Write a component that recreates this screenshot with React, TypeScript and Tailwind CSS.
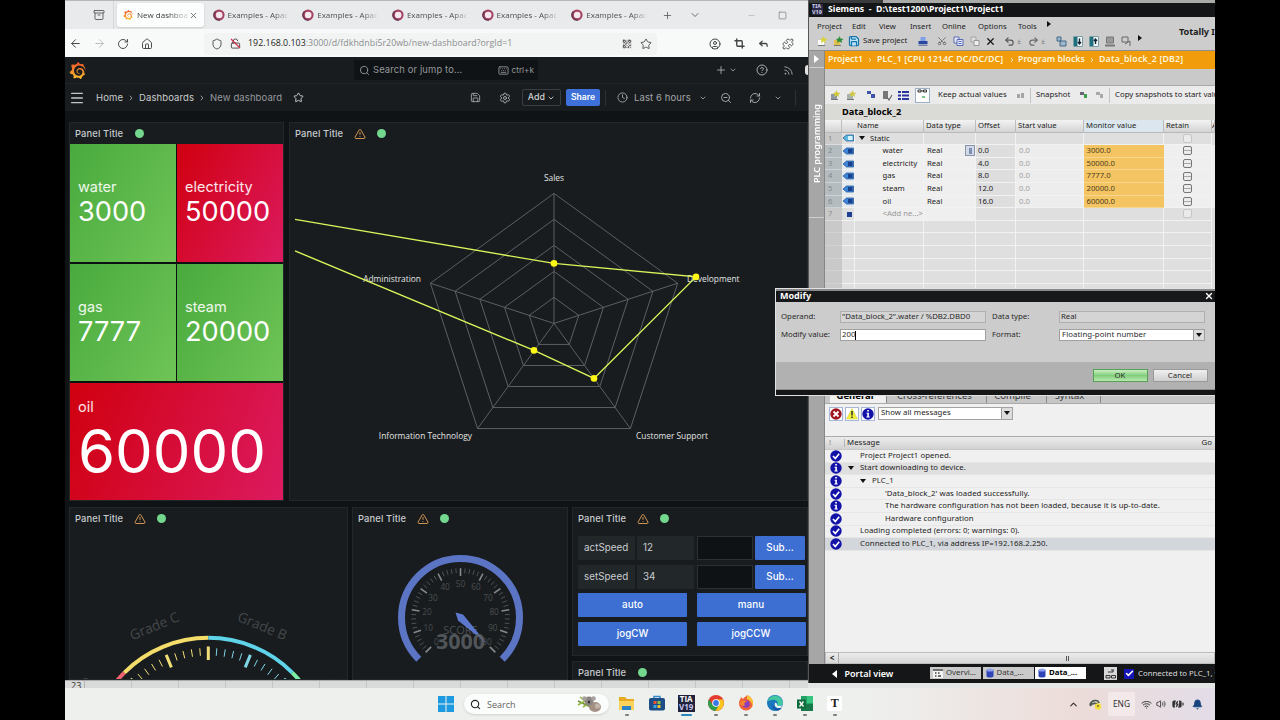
import type { ReactNode } from "react";
import {
  Archive, ArrowLeft, ArrowRight, BatteryCharging, Bell, Check, ChevronDown, ChevronRight, ChevronUp, CircleHelp, CircleUser,
  Clock4, Crop, House, Keyboard, LockOpen, Menu, Minus, Plus, Puzzle, QrCode, RefreshCw, Reply, RotateCw, Rss, Save, Scissors,
  Search, Settings, Shield, Square, Star, TriangleAlert, Undo2, Redo2, Volume2, Wifi, X, ZoomOut,
} from "lucide-react";
import { SiGrafana } from "react-icons/si";

const EXAMPLE_TABS = [1, 2, 3, 4, 5];

function polar(cx: number, cy: number, r: number, deg: number): [number, number] {
  const a = ((deg - 90) * Math.PI) / 180;
  return [cx + r * Math.cos(a), cy + r * Math.sin(a)];
}

function arc(cx: number, cy: number, r: number, from: number, to: number) {
  const [x1, y1] = polar(cx, cy, r, from);
  const [x2, y2] = polar(cx, cy, r, to);
  return `M${x1} ${y1} A${r} ${r} 0 ${to - from > 180 ? 1 : 0} 1 ${x2} ${y2}`;
}

function GrafanaLogo({ size }: { size: number }) {
  return (
    <>
      <svg width="0" height="0" className="absolute">
        <linearGradient id="grafana" x1="0" y1="0" x2="0" y2="1">
          <stop offset="0" stopColor="#ef5228" />
          <stop offset="1" stopColor="#fbc02d" />
        </linearGradient>
      </svg>
      <SiGrafana size={size} fill="url(#grafana)" />
    </>
  );
}

/* ---------- Firefox window ---------- */

function TabStrip() {
  return (
    <div className="flex h-[29px] items-center border-t border-[#b8b8b8] bg-[#e8eaeb] text-[9px] text-[#4b4d50] [&>*]:shrink-0">
      <div className="flex h-full w-[49px] items-center justify-end border-r border-[#d5d7d8] pr-[8px]">
        <Archive size={12} strokeWidth={1.7} />
      </div>
      <div className="ml-[3px] flex h-[24px] w-[87px] items-center rounded-[3px] bg-[#fcfdfd] pl-[6px] shadow-sm [&>*]:shrink-0">
        <GrafanaLogo size={10} />
        <span className="ml-[4px] w-[51px] overflow-hidden whitespace-nowrap bg-linear-to-r from-[#333] from-60% to-[#ddd] bg-clip-text text-[8px] leading-[12px] text-transparent">New dashboa</span>
        <X size={9} strokeWidth={2} className="ml-px" />
      </div>
      {EXAMPLE_TABS.map((n) => (
        <div key={n} className="flex w-[89.7px] items-center pl-[8.5px]">
          <svg width="12" height="12" viewBox="0 0 12 12" className="shrink-0">
            <circle cx="6" cy="6" r="5.6" fill="#a34262" />
            <circle cx="6.2" cy="6" r="3.3" fill="#f6e9ee" />
            <path d="M2.5 2.5A5 5 0 0 0 7 11" fill="none" stroke="#5d3550" strokeWidth="1.2" />
          </svg>
          <span className="ml-[3px] w-[61px] overflow-hidden whitespace-nowrap bg-linear-to-r from-[#46484b] from-75% to-[#e0e0e0] bg-clip-text text-[8px] leading-[12px] text-transparent">Examples - Apac</span>
        </div>
      ))}
      <Plus size={11} strokeWidth={1.6} className="ml-[10px]" />
      <ChevronDown size={12} strokeWidth={1.6} className="ml-[16px]" />
      <Minus size={9} strokeWidth={1.2} className="ml-[46px] text-[#999]" />
      <Square size={9} strokeWidth={1.8} className="ml-[22px] text-[#777]" />
    </div>
  );
}

function NavBar() {
  return (
    <div className="flex h-[28px] items-center bg-[#f8faf9] pt-[1px] text-[#444] [&>*]:shrink-0">
      <ArrowLeft size={13} strokeWidth={1.8} className="ml-[4px]" />
      <ArrowRight size={13} strokeWidth={1.6} className="ml-[11px] text-[#b5b7b8]" />
      <RotateCw size={12} strokeWidth={1.9} className="ml-[11px]" />
      <House size={12} strokeWidth={1.9} className="ml-[12px]" />
      <div className="ml-[51px] flex h-[22px] w-[453px] items-center rounded-sm bg-[#f2f4f3]">
        <Shield size={12} strokeWidth={1.8} className="ml-[7px]" />
        <span className="relative ml-[7px]">
          <LockOpen size={11} strokeWidth={2} />
          <svg width="11" height="11" viewBox="0 0 11 11" className="absolute inset-0">
            <path d="M1 1 10 10" stroke="#d2304c" strokeWidth="1.2" />
          </svg>
        </span>
        <span className="ml-[7px] whitespace-nowrap text-[8.8px] tracking-[0.04px] text-[#8b8d8f]">
          <span className="text-[#222]">192.168.0.103</span>:3000/d/fdkhdnbi5r20wb/new-dashboard?orgId=1
        </span>
        <QrCode size={10} strokeWidth={2.4} className="ml-auto" />
        <Star size={12} strokeWidth={1.8} className="mr-[5px] ml-[8px]" />
      </div>
      <CircleUser size={12} strokeWidth={2} className="ml-[52px]" />
      <Crop size={11} strokeWidth={3} className="ml-[13px]" />
      <Reply size={11} strokeWidth={2.8} className="ml-[13px]" />
      <Puzzle size={12} strokeWidth={1.8} className="ml-[13px]" />
    </div>
  );
}

function GrafanaHeader() {
  return (
    <div className="bg-[#181c1e] text-[#a9acb0]">
      <div className="flex h-[27px] items-center border-b border-[#212628] [&>*]:shrink-0">
        <span className="ml-[4px] w-[285px]"><GrafanaLogo size={17} /></span>
        <div className="flex h-[20px] w-[184px] items-center bg-[#101315] text-[9.4px] text-[#94979a]">
          <Search size={11} strokeWidth={2} className="ml-[5px]" />
          <span className="ml-[3px] tracking-[0.14px]">Search or jump to...</span>
          <Keyboard size={11} strokeWidth={1.9} className="ml-auto" />
          <span className="mr-[4px] ml-[3px] text-[8.2px]">ctrl+k</span>
        </div>
        <Plus size={12} strokeWidth={1.8} className="ml-[177px]" />
        <ChevronDown size={8} strokeWidth={2.4} className="ml-[2px]" />
        <CircleHelp size={12} strokeWidth={2} className="ml-[19px]" />
        <Rss size={11} strokeWidth={2} className="ml-[15px]" />
        <span className="ml-auto h-[10px] w-[3px] rounded-l-full bg-[#e3e3e3]" />
      </div>
      <div className="flex h-[27px] items-center text-[9.5px] tracking-[0.1px] [&>*]:shrink-0">
        <Menu size={16} strokeWidth={2.1} className="ml-[4px] text-[#c3c5c8]" />
        <span className="ml-[11px] text-[#cacccf]">Home</span>
        <ChevronRight size={8} strokeWidth={2.5} className="ml-[4px]" />
        <span className="ml-[4px] text-[#cacccf]">Dashboards</span>
        <ChevronRight size={8} strokeWidth={2.5} className="ml-[4px]" />
        <span className="ml-[4px] text-[#96999d]">New dashboard</span>
        <Star size={11} strokeWidth={2} className="ml-[11px] text-[#d0d2d5]" />
        <div className="ml-auto flex items-center">
          <Save size={11} strokeWidth={1.9} />
          <Settings size={12} strokeWidth={1.9} className="ml-[18px]" />
          <div className="ml-[11px] flex h-[17px] w-[39px] items-center justify-center gap-[2px] rounded-[2px] border border-[#3a3f43] text-[8.8px] font-medium text-[#d0d2d5]">
            Add <ChevronDown size={8} strokeWidth={2.6} />
          </div>
          <div className="ml-[5px] flex h-[17px] w-[34px] items-center justify-center rounded-[2px] bg-[#3d71d9] text-[8.6px] font-semibold tracking-normal text-white">Share</div>
          <span className="ml-[5px] h-[16px] w-px bg-[#2c3135]" />
          <Clock4 size={11} strokeWidth={1.9} className="ml-[11px]" />
          <span className="ml-[6px] w-[57px] whitespace-nowrap text-[#a4a7ab]">Last 6 hours</span>
          <ChevronDown size={8} strokeWidth={2.4} className="ml-[8px]" />
          <ZoomOut size={12} strokeWidth={1.9} className="ml-[13px]" />
          <RefreshCw size={12} strokeWidth={1.9} className="ml-[17px]" />
          <ChevronDown size={8} strokeWidth={2.4} className="ml-[13px]" />
          <span className="mr-[12px] ml-[13px] h-[16px] w-px bg-[#2c3135]" />
        </div>
      </div>
    </div>
  );
}

function PanelHead({ warn = false }: { warn?: boolean }) {
  return (
    <div className="flex h-[21px] shrink-0 items-center pl-[5px] text-[9.4px] font-medium tracking-[0.12px] text-[#c8cbcf]">
      <span className="w-[49px] whitespace-nowrap">Panel Title</span>
      {warn && <TriangleAlert size={12} strokeWidth={1.9} className="ml-[9.500px] text-[#d99a55]" />}
      <span className="ml-[11px] size-[9px] rounded-full bg-[#73d88e]" />
    </div>
  );
}

function StatTile({ name, value }: { name: string; value: string }) {
  const bad = Number(value) >= 50000;
  return (
    <div className={`flex flex-col justify-center pt-[1px] pl-[8px] text-white ${bad ? "bg-linear-[120deg] from-[#d0000f] to-[#dc1a60]" : "bg-linear-[120deg] from-[#49aa3d] to-[#6fc457]"}`}>
      <span className="text-[14.5px] leading-[17px] text-white/90">{name}</span>
      <span className="pt-[1px] text-[27.2px] leading-[32px]">{value}</span>
    </div>
  );
}

const RADAR_LABELS: { text: string; x: number; y: number; anchor: "start" | "middle" | "end" }[] = [
  { text: "Sales", x: 554, y: 181, anchor: "middle" },
  { text: "Administration", x: 421, y: 282, anchor: "end" },
  { text: "Development", x: 687, y: 282, anchor: "start" },
  { text: "Information Technology", x: 472, y: 439, anchor: "end" },
  { text: "Customer Support", x: 636, y: 439, anchor: "start" },
];
const RADAR_POINTS = [[554, 263], [696, 276.5], [594, 378], [534, 350]];

function Radar() {
  const cx = 554, cy = 323;
  return (
    <svg width="518" height="357" viewBox="290 143.6 518 357" className="shrink-0">
      <g fill="none" stroke="#5c5f64" strokeWidth="1">
        {[26, 52, 78, 104, 130].map((r) => (
          <polygon key={r} points={[0, 72, 144, 216, 288].map((a) => polar(cx, cy, r, a).join(",")).join(" ")} />
        ))}
        {[0, 72, 144, 216, 288].map((a) => {
          const [x, y] = polar(cx, cy, 130, a);
          return <path key={a} d={`M${cx} ${cy} L${x} ${y}`} />;
        })}
      </g>
      {RADAR_LABELS.map((l) => (
        <text key={l.text} x={l.x} y={l.y} textAnchor={l.anchor} fontSize="8.4" fill="#e4e4e4" fontFamily="Open Sans">{l.text}</text>
      ))}
      <path d="M295 219 L554 263 L696 276.5 L594 378 L534 350 L295 250.500" fill="none" stroke="#dcf45a" strokeWidth="1.4" />
      {RADAR_POINTS.map(([x, y]) => <circle key={x} cx={x} cy={y} r="3.3" fill="#fff714" />)}
    </svg>
  );
}

const GRADES: [number, number, string][] = [[-90, -45, "#ee6170"], [-45, 0, "#f5dd6b"], [0, 45, "#5fd3e8"], [45, 90, "#7bf0a6"]];
const GRADE_LABELS: [string, number][] = [["Grade D", -67.5], ["Grade C", -22.5], ["Grade B", 22.5], ["Grade A", 67.5]];

function GradeGauge() {
  const cx = 208.3, cy = 756.5;
  const ticks = Array.from({ length: 41 }, (_, i) => -90 + i * 4.5);
  const color = (a: number) => (a < -45 ? "#ee6170" : a <= 0 ? "#f0de78" : a <= 45 ? "#7fd6e6" : "#7bf0a6");
  return (
    <svg width="277" height="152" viewBox="70 529 277 152" className="shrink-0">
      {GRADES.map(([a, b, c]) => <path key={a} d={arc(cx, cy, 118.7, a, b)} fill="none" stroke={c} strokeWidth="4" />)}
      {ticks.map((a, i) => {
        const major = i % 5 === 0;
        const [x1, y1] = polar(cx, cy, major ? 110 : 108.5, a);
        const [x2, y2] = polar(cx, cy, major ? 96.5 : 101, a);
        return <line key={a} x1={x1} y1={y1} x2={x2} y2={y2} stroke={color(a)} strokeWidth={major ? 3 : 1} />;
      })}
      {GRADE_LABELS.map(([t, a]) => {
        const [x, y] = polar(cx, cy, 141.4, a);
        return (
          <text key={t} x={x} y={y + 5} textAnchor="middle" fontSize="13.8" fill="#44484b" fontFamily="Open Sans"
            transform={`rotate(${a} ${x} ${y})`}>{t}</text>
        );
      })}
    </svg>
  );
}

function ScoreGauge() {
  const cx = 460.5, cy = 617.5;
  return (
    <svg width="214" height="152" viewBox="353 529 214 152" className="shrink-0">
      <path d={arc(cx, cy, 59, -135, 135)} fill="none" stroke="#5b74c4" strokeWidth="7" />
      {Array.from({ length: 51 }, (_, i) => {
        const a = -135 + i * 5.4;
        const major = i % 5 === 0;
        const [x1, y1] = polar(cx, cy, 49.3, a);
        const [x2, y2] = polar(cx, cy, major ? 41.5 : 44.5, a);
        return <line key={i} x1={x1} y1={y1} x2={x2} y2={y2} stroke={major ? "#85898c" : "#54585b"} strokeWidth={major ? 1.6 : 0.9} />;
      })}
      <g textAnchor="middle" fontFamily="Open Sans" fill="#4b4f52">
        {Array.from({ length: 11 }, (_, i) => {
          const [x, y] = polar(cx, cy, 34, -135 + i * 27);
          return <text key={i} x={x} y={y + 3} fontSize="8.2">{i * 10}</text>;
        })}
        <text x={cx} y="633.5" fontSize="11">SCORE</text>
      </g>
      <path d="M455.5 612.5 L463 614.5 L486.8 643.5 L458 620.5 Z" fill="#5b78cc" />
      <text x={cx} y="648.5" fontSize="21.5" fontWeight="700" textAnchor="middle" fontFamily="Open Sans" fill="#5c6063" fillOpacity="0.85">3000</text>
    </svg>
  );
}

function SpeedForm() {
  const cell = "flex h-[24px] items-center rounded-[1px] bg-[#22272a] pl-[6px]";
  const btn = "flex h-[24px] items-center justify-center rounded-[1px] bg-[#3d6fd3] font-medium text-white";
  return (
    <div className="flex flex-col gap-[4.4px] pt-[7.400px] pl-[5px] text-[9.8px] tracking-[0.05px] text-[#cacdd0]">
      {[["actSpeed", "12"], ["setSpeed", "34"]].map(([k, v]) => (
        <div key={k} className="flex [&>*]:shrink-0">
          <div className={`${cell} w-[57px] whitespace-nowrap`}>{k}</div>
          <div className={`${cell} ml-[2px] w-[57px]`}>{v}</div>
          <div className="ml-[3px] h-[24px] w-[56px] border border-[#2b3033] bg-[#0f1214]" />
          <div className={`${btn} ml-[2px] w-[50px]`}>Sub...</div>
        </div>
      ))}
      {[["auto", "manu"], ["jogCW", "jogCCW"]].map(([a, b]) => (
        <div key={a} className="flex gap-[9.500px] [&>*]:shrink-0">
          <div className={`${btn} w-[109px]`}>{a}</div>
          <div className={`${btn} w-[109px]`}>{b}</div>
        </div>
      ))}
    </div>
  );
}

const PANEL = "flex flex-col overflow-hidden border border-[#22272a] bg-[#181c1e]";

function Browser() {
  return (
    <div className="flex h-[680px] w-[743px] flex-col overflow-hidden bg-[#101315]">
      <TabStrip />
      <NavBar />
      <div className="flex flex-1 flex-col font-[Inter,sans-serif]">
        <GrafanaHeader />
        <div className="mt-[11px] flex h-[379px] shrink-0 pl-[4px]">
          <div className={`${PANEL} w-[215px]`}>
            <PanelHead />
            <div className="grid flex-1 grid-cols-[105.500px_106px] grid-rows-[117.500px_117.500px_117.500px] gap-x-[1.500px] gap-y-[2px] bg-[#0d1011]">
              <StatTile name="water" value="3000" />
              <StatTile name="electricity" value="50000" />
              <StatTile name="gas" value="7777" />
              <StatTile name="steam" value="20000" />
              <div className="col-span-2 flex flex-col bg-linear-[110deg] from-[#d0000f] to-[#dc1a60] pt-[15px] pl-[8px] text-white">
                <span className="text-[14.5px] leading-[18px] text-white/90">oil</span>
                <span className="text-[59.8px] leading-[71px]">60000</span>
              </div>
            </div>
          </div>
          <div className={`${PANEL} ml-[5px] w-[519px]`}>
            <PanelHead warn />
            <Radar />
          </div>
        </div>
        <div className="mt-[6px] flex h-[173px] pl-[4px]">
          <div className={`${PANEL} w-[279px]`}>
            <PanelHead warn />
            <GradeGauge />
          </div>
          <div className={`${PANEL} ml-[4px] w-[216px]`}>
            <PanelHead warn />
            <ScoreGauge />
          </div>
          <div className="ml-[4px] flex w-[236px] flex-col gap-[5px]">
            <div className={`${PANEL} h-[149px] shrink-0`}>
              <PanelHead warn />
              <SpeedForm />
            </div>
            <div className={`${PANEL} flex-1`}>
              <PanelHead />
            </div>
          </div>
        </div>
      </div>
    </div>
  );
}

/* ---------- TIA Portal window ---------- */

function TagIcon({ light = false }: { light?: boolean }) {
  return (
    <svg width="11" height="8" viewBox="0 0 11 8">
      <path d="M0 4 3.5 1H10.5V7H3.5Z" fill={light ? "#59b8dc" : "#3f86d8"} stroke="#1d4f93" strokeWidth="0.7" />
      <path d="M5 2h4.500v4H5z" fill={light ? "#d8f2fb" : "#1a428c"} />
    </svg>
  );
}

function Blocks({ a, b }: { a: string; b: string }) {
  return (
    <svg width="11" height="11" viewBox="0 0 11 11">
      <path d="M1 4h6v5H1z" fill={a} />
      <path d="M6.500 0l1 2.500 3 .5-2 1.500.5 2.500-2.500-1.500L4 7l.5-2.500L3 3l2.500-.5Z" fill={b} />
      <path d="M1 9.500h7" stroke="#777" />
    </svg>
  );
}

function FileIcon({ arrow }: { arrow: string }) {
  return (
    <svg width="10" height="11" viewBox="0 0 10 11">
      <rect x="0.500" y="0.500" width="9" height="10" fill="#1f6f7d" />
      <path d="M4.500 1H9v9H4.500z" fill="#f1f5f5" />
      <path d={arrow} fill="none" stroke="#123" strokeWidth="1.3" />
    </svg>
  );
}

function SiemensTop() {
  return (
    <div className="flex h-[34px] shrink-0 overflow-hidden border-b border-[#8e8e8e] bg-[#cdcdcd]">
      <div className="flex w-[340px] shrink-0 flex-col">
        <div className="flex h-[18px] items-center pt-[1px] pl-[8px] text-[7.7px] [&>*]:shrink-0">
          <span className="w-[35px]">Project</span>
          <span className="w-[27px]">Edit</span>
          <span className="w-[31px]">View</span>
          <span className="w-[32px]">Insert</span>
          <span className="w-[36px]">Online</span>
          <span className="w-[40px]">Options</span>
          <span className="w-[29px]">Tools</span>
          <svg width="4" height="6" className="mb-[5px]"><path d="M0 0v6L4 3z" fill="#111" /></svg>
        </div>
        <div className="flex h-[12px] items-center pl-[8px] text-[7.8px] [&>*]:shrink-0">
          <Blocks a="#fafafa" b="#d8d43c" />
          <span className="ml-[5px]"><Blocks a="#e0c24a" b="#2c8c3a" /></span>
          <Save size={12} strokeWidth={2.5} className="ml-[4px] fill-[#bfe6f8] text-[#1674a8]" />
          <span className="ml-[3px] w-[49px] whitespace-nowrap tracking-[-0.03px]">Save project</span>
          <svg width="12" height="11" viewBox="0 0 11 11" className="ml-[5px]">
            <path d="M3 1h5v4H3z" fill="#7f9fe8" />
            <path d="M1 5h9v3H1z" fill="#29479f" />
            <path d="M1 8.500h9v1.500H1z" fill="#7581ad" />
          </svg>
          <Scissors size={10} strokeWidth={2} className="ml-[8px] -rotate-90 text-[#666]" />
          <svg width="11" height="11" viewBox="0 0 11 11" className="ml-[6px]">
            <path d="M1 1h5v6H1z" fill="#e8ecf8" stroke="#3b51a8" strokeWidth="0.8" />
            <path d="M4 3.500h6v6H4z" fill="#dfe6f8" stroke="#3b51a8" strokeWidth="0.8" />
            <path d="M5.500 5.500h3M5.500 7.500h3" stroke="#3b51a8" strokeWidth="0.8" />
          </svg>
          <svg width="10" height="11" viewBox="0 0 10 11" className="ml-[6px]">
            <path d="M1 1h5v5H1z" fill="#ddd" stroke="#999" strokeWidth="0.8" />
            <path d="M4 4.500h5v5H4z" fill="#eee" stroke="#888" strokeWidth="0.8" />
          </svg>
          <X size={11} strokeWidth={3} className="ml-[5px]" />
          <Undo2 size={11} strokeWidth={2.4} className="ml-[8px] text-[#555]" />
          <span className="w-[8px] pl-[2px] text-[7px] text-[#777]">±</span>
          <Redo2 size={11} strokeWidth={2.4} className="ml-[5px] text-[#666]" />
          <span className="w-[8px] pl-[2px] text-[7px] text-[#777]">±</span>
          <svg width="11" height="11" viewBox="0 0 11 11" className="ml-[9px]">
            <path d="M1 1h4v4H1zM4 5h6v5H4z" fill="#9db6cc" stroke="#36607f" strokeWidth="0.900" />
          </svg>
          <span className="ml-[6px]"><FileIcon arrow="M6.500 2.500v5M5 6l1.500 2L8 6" /></span>
          <span className="ml-[6px]"><FileIcon arrow="M6.500 8V3M5 5l1.500-2L8 5" /></span>
          <svg width="10" height="11" viewBox="0 0 10 11" className="ml-[6px]">
            <path d="M1.500 1h7v6h-7z" fill="#999" stroke="#777" />
            <path d="M0 9.500h10" stroke="#777" strokeWidth="2" />
          </svg>
          <svg width="11" height="11" viewBox="0 0 11 11" className="ml-[6px]">
            <path d="M1 1h6v5H1zM4 8l5-3v5" fill="none" stroke="#666" />
          </svg>
          <svg width="4" height="6" className="mb-[7px] ml-[6px]"><path d="M0 0v6L4 3z" fill="#111" /></svg>
        </div>
      </div>
      <span className="pt-[9.500px] pl-[30px] text-[9.2px] font-bold tracking-[-0.1px] whitespace-nowrap">Totally Integrated</span>
    </div>
  );
}

function EditorToolbar() {
  return (
    <div className="flex h-[19px] shrink-0 items-center border-t border-[#aaa] bg-[#ebebeb] pl-[5px] text-[7.8px] whitespace-nowrap [&>*]:shrink-0">
      <Blocks a="#8d96a5" b="#cfc83d" />
      <span className="ml-[5px]"><Blocks a="#a9b1b0" b="#d0c94c" /></span>
      <svg width="10" height="10" viewBox="0 0 10 10" className="ml-[9px]"><path d="M1 1h4v3H1zM5 4h4v4H5z" fill="#3d52a8" /></svg>
      <svg width="11" height="11" viewBox="0 0 11 11" className="ml-[6px]">
        <path d="M1 1h5v8H1z" fill="#777" />
        <path d="M5 7l2 3 3-5" fill="none" stroke="#666" strokeWidth="1.200" />
      </svg>
      <svg width="11" height="11" viewBox="0 0 11 11" className="ml-[5px]">
        <path d="M0 1h3v2H0zM0 4.500h3v2H0zM0 8h3v2H0z" fill="#2a35a0" />
        <path d="M4 2h7M4 5.500h7M4 9h7" stroke="#2a35a0" strokeWidth="1.800" />
      </svg>
      <span className="ml-[6px] flex h-[15px] w-[15px] flex-col items-center border border-[#9bb0c8] bg-white">
        <svg width="11" height="11" viewBox="0 0 11 11">
          <path d="M1 1h3v2H1zM6.500 1h3v2h-3zM4 2h3" fill="none" stroke="#333" />
          <path d="M5 7h3v2H5z" fill="#7cc48a" />
        </svg>
      </span>
      <span className="ml-[8px] w-[71px] tracking-[0.05px]">Keep actual values</span>
      <svg width="8" height="8" viewBox="0 0 8 8" className="ml-[8px]"><path d="M0 3h3v4H0zM4 2h3v5H4z" fill="#a5a5a5" /></svg>
      <span className="ml-[5px] h-[15px] w-px bg-[#c4c4c4]" />
      <span className="ml-[5px] w-[36px]">Snapshot</span>
      <svg width="8" height="8" viewBox="0 0 8 8" className="ml-[8px]"><path d="M0 1h4v3H0z" fill="#667" /><path d="M4 3h3v4H4z" fill="#3d9c4d" /></svg>
      <svg width="8" height="8" viewBox="0 0 8 8" className="ml-[8px]"><path d="M0 1h4v3H0zM4 3h3v4H4z" fill="#a8a8a8" /></svg>
      <span className="ml-[5px] h-[15px] w-px bg-[#c4c4c4]" />
      <span className="ml-[5px]">Copy snapshots to start values</span>
    </div>
  );
}

const VARS = [
  { n: 2, name: "water", offset: "0.0", value: "3000.0" },
  { n: 3, name: "electricity", offset: "4.0", value: "50000.0" },
  { n: 4, name: "gas", offset: "8.0", value: "7777.0" },
  { n: 5, name: "steam", offset: "12.0", value: "20000.0" },
  { n: 6, name: "oil", offset: "16.0", value: "60000.0" },
];
const COLS = "grid shrink-0 grid-cols-[17px_13px_69px_52px_40px_68px_80px_48px_3px] [&>*]:overflow-hidden";

function Box({ dim = false }: { dim?: boolean }) {
  return <span className={`size-[9px] rounded-[2px] border ${dim ? "border-[#c6c6c6] bg-[#eaeaea]" : "border-[#777] bg-linear-to-b from-[#ececec] from-45% via-[#a8a8a8] via-50% to-[#ececec] to-55%"}`} />;
}

function BlockTable() {
  const cell = "flex items-center border-r border-b border-[#f2f2f2]";
  return (
    <div className="flex h-[269px] flex-col overflow-hidden bg-[#dfdfdf] text-[7.7px] whitespace-nowrap">
      <div className={`${COLS} h-[12.600px] border-b border-[#b9b9b9] bg-linear-to-b from-[#f3f3f3] to-[#d4d4d4] [&>*]:flex [&>*]:items-center [&>*]:border-r [&>*]:border-[#bdbdbd]`}>
        <span />
        <span className="border-none!" />
        <span className="pl-[2px]">Name</span>
        <span className="pl-[2px]">Data type</span>
        <span className="pl-[2px]">Offset</span>
        <span className="pl-[2px]">Start value</span>
        <span className="bg-[#dbe6ee] pl-[2px]">Monitor value</span>
        <span className="pl-[2px]">Retain</span>
        <span>A</span>
      </div>
      <div className={`${COLS} h-[12.6px]`}>
        <span className="flex items-center border-b border-[#ddd] bg-[#c9c9c9] pl-[3px] text-[#8d8d8d]">1</span>
        <span className={`${cell} pl-[1px]`}><TagIcon light /></span>
        <span className={`${cell} pl-[4px]`}><svg width="6" height="4" className="mr-[5px]"><path d="M0 0h6L3 4z" fill="#111" /></svg>Static</span>
        <span className={cell} /><span className={cell} /><span className={cell} /><span className={cell} />
        <span className={`${cell} justify-center`}><Box dim /></span>
        <span />
      </div>
      {VARS.map((v) => (
        <div key={v.n} className={`${COLS} h-[12.6px]`}>
          <span className="flex items-center border-b border-[#ccd3d6] bg-[#b4bcc0] pl-[3px] text-[#84898b]">{v.n}</span>
          <span className={`${cell} bg-[#e4eaed] pl-[1px]`}><TagIcon /></span>
          <span className={`${cell} bg-[#efefef] pl-[27.500px]`}>{v.name}</span>
          <span className={`${cell} bg-[#efefef] pl-[3px]`}>
            Real
            {v.n === 2 && <span className="ml-auto flex h-[11px] w-[10px] items-center justify-center border border-[#8895ad] bg-[#d2d9e6]"><span className="h-[6px] w-[3px] bg-[#7d8db3]" /></span>}
          </span>
          <span className={`${cell} bg-[#dedede] pl-[2px]`}>{v.offset}</span>
          <span className={`${cell} bg-[#ededed] pl-[3px] text-[#a0a0a0]`}>0.0</span>
          <span className="flex items-center border-b border-[#f7d68e] bg-[#f5c462] pl-[2.500px] text-[#4a3d20]">{v.value}</span>
          <span className={`${cell} justify-center bg-[#efefef]`}><Box /></span>
          <span className="bg-[#efefef]" />
        </div>
      ))}
      <div className={`${COLS} h-[12.6px]`}>
        <span className="flex items-center border-b border-[#ddd] bg-[#c9c9c9] pl-[3px] text-[#8d8d8d]">7</span>
        <span className={`${cell} pt-[2px] pl-[5px]`}><span className="size-[5px] bg-[#1d3f93]" /></span>
        <span className={`${cell} bg-[#efefef] pl-[27.500px] text-[#999]`}>&lt;Add ne...&gt;</span>
        <span className={`${cell} bg-[#efefef]`} /><span className={cell} /><span className={cell} /><span className={cell} />
        <span className={`${cell} justify-center`}><Box dim /></span>
        <span />
      </div>
      {[8, 9, 10, 11, 12, 13].map((n) => (
        <div key={n} className={`${COLS} h-[12.6px]`}>
          <span className="border-b border-[#d2d2d2] bg-[#c9c9c9]" />
          <span className={cell} /><span className={cell} /><span className={cell} /><span className={cell} />
          <span className={cell} /><span className={cell} /><span className={cell} />
          <span />
        </div>
      ))}
    </div>
  );
}

function Badge({ kind }: { kind: "ok" | "info" | "error" }) {
  return (
    <svg width="12" height="12" viewBox="0 0 12 12" className="shrink-0">
      <circle cx="6" cy="6" r="5.7" fill={kind === "error" ? "#a01320" : "#1212a8"} />
      {kind === "ok" && <path d="M3 6l2.300 2.500L9.200 3.800" fill="none" stroke="#fff" strokeWidth="1.700" />}
      {kind === "info" && <path d="M5.200 2h1.700v1.500H5.200zM4.500 4.800h2.400v3.700h.8v1H4.400v-1h.9V5.700h-.8z" fill="#fff" />}
      {kind === "error" && <path d="M3.500 3.500l5 5M8.500 3.500l-5 5" stroke="#fff" strokeWidth="1.800" />}
    </svg>
  );
}

type Message = { kind: "ok" | "info"; text: string; level: string; open?: boolean; row?: string };
const MESSAGES: Message[] = [
  { kind: "ok", text: "Project Project1 opened.", level: "w-[13px]" },
  { kind: "info", text: "Start downloading to device.", level: "w-[13px]", open: true, row: "bg-[#dfdfdf]" },
  { kind: "info", text: "PLC_1", level: "w-[25px]", open: true },
  { kind: "ok", text: "'Data_block_2' was loaded successfully.", level: "w-[38px]" },
  { kind: "info", text: "The hardware configuration has not been loaded, because it is up-to-date.", level: "w-[38px]" },
  { kind: "ok", text: "Hardware configuration", level: "w-[38px]" },
  { kind: "ok", text: "Loading completed (errors: 0; warnings: 0).", level: "w-[13px]" },
  { kind: "ok", text: "Connected to PLC_1, via address IP=192.168.2.250.", level: "w-[13px]", row: "bg-[#d3d7db]" },
];

function DropArrow() {
  return (
    <span className="flex h-full w-[11px] items-center justify-center border-l border-[#999] bg-[#dcdcdc]">
      <svg width="6" height="4"><path d="M0 0h6L3 4z" fill="#111" /></svg>
    </span>
  );
}

function Inspector() {
  const tab = "flex items-end border-r border-[#888] pb-[1px] justify-center";
  return (
    <div className="flex h-[275px] flex-col bg-[#f0f0f0] text-[7.8px] tracking-[0.06px] whitespace-nowrap">
      <div className="flex h-[15px] shrink-0 border-b border-[#aaa] bg-[#c6c6c6] pl-[5px] text-[9.500px] leading-[13px] tracking-normal text-[#333]">
        <span className={`${tab} w-[57px] bg-[#f0f0f0] pr-[6px] font-bold text-black`}>General</span>
        <span className={`${tab} w-[100px] pr-[4px]`}>Cross-references</span>
        <span className={`${tab} w-[60px] pr-[8px]`}>Compile</span>
        <span className={`${tab} w-[54px] pr-[8px]`}>Syntax</span>
      </div>
      <div className="flex h-[33px] shrink-0 items-start gap-[2px] border-b border-[#aaa] pt-[2.500px] pl-[3.500px]">
        <span className="flex size-[14px] items-center justify-center border border-[#a7b7d8] bg-white"><Badge kind="error" /></span>
        <span className="flex size-[14px] items-center justify-center border border-[#a7b7d8] bg-white">
          <svg width="12" height="12" viewBox="0 0 12 12"><path d="M6 .5 11.500 11H.5z" fill="#f2f03c" stroke="#c9c838" strokeWidth="0.500" /><path d="M6 3v4.500M6 8.500v1.500" stroke="#222" strokeWidth="1.400" /></svg>
        </span>
        <span className="flex size-[14px] items-center justify-center border border-[#a7b7d8] bg-white"><Badge kind="info" /></span>
        <span className="ml-[1.500px] flex h-[13px] w-[135px] items-center justify-between border border-[#a3a3a3] bg-white pl-[2px]">Show all messages<DropArrow /></span>
      </div>
      <div className="flex h-[13px] shrink-0 items-center border-b border-[#c8c8c8] bg-linear-to-b from-[#ececec] to-[#d2d2d2]">
        <span className="w-[20px] border-r border-[#b4b4b4] pl-[4px] text-[#888]">!</span>
        <span className="pl-[2px]">Message</span>
        <span className="ml-auto pr-[3px]">Go</span>
      </div>
      {MESSAGES.map((m) => (
        <div key={m.text} className={`flex h-[12.6px] shrink-0 items-center border-b border-[#e6e6e6] pl-[4.500px] ${m.row ?? ""}`}>
          <Badge kind={m.kind} />
          <span className="ml-[5.500px] flex items-center">
            <span className={`${m.level} flex justify-end pr-[6px]`}>{m.open && <svg width="6" height="4"><path d="M0 0h6L3 4z" fill="#111" /></svg>}</span>
            {m.text}
          </span>
        </div>
      ))}
      <div className="mt-auto flex h-[12px] shrink-0 items-center border border-[#bcbcbc] bg-linear-to-b from-[#ececec] to-[#d6d6d6] text-[8px]">
        <span className="flex h-full w-[13px] items-center justify-center border-r border-[#aaa] font-bold">&lt;</span>
        <span className="ml-[227px] flex gap-[1px]"><span className="h-[5px] w-px bg-[#555]" /><span className="h-[5px] w-px bg-[#555]" /></span>
      </div>
    </div>
  );
}

function Cylinder() {
  return (
    <svg width="8" height="10" viewBox="0 0 8 10">
      <path d="M.5 2v6c0 2 7 2 7 0V2z" fill="#2f45b5" />
      <ellipse cx="4" cy="2" rx="3.500" ry="1.500" fill="#8fa0ec" />
    </svg>
  );
}

function StatusBar() {
  const tab = "flex h-[12px] w-[51px] items-center gap-[3px] bg-[#c9c9c9] pl-[3px] text-[7.8px] [&>*]:shrink-0";
  return (
    <div className="flex h-[19px] items-center bg-[#151617] whitespace-nowrap text-white [&>*]:shrink-0">
      <svg width="5" height="8" className="ml-[23px]"><path d="M5 0v8L0 4z" fill="#fff" /></svg>
      <span className="ml-[7.500px] w-[49px] text-[9px] font-semibold">Portal view</span>
      <div className="ml-[36.500px] flex gap-[1.500px] pb-[1px] text-[#333]">
        <span className={tab}>
          <svg width="10" height="9" viewBox="0 0 10 9"><path d="M0 0h10v9H0z" fill="#f4f4f4" /><path d="M0 1h10M2 4h1.500M5 4h1.500M2 7h1.500M5 7h3" stroke="#444" strokeWidth="1.500" /></svg>
          Overvi...
        </span>
        <span className={tab}><Cylinder />Data_...</span>
        <span className="flex h-[12px] w-[51px] items-center gap-[3px] bg-white pl-[3px] text-[7.8px] font-bold text-black"><Cylinder />Data_...</span>
      </div>
      <svg width="13" height="13" viewBox="0 0 13 13" className="ml-[18px]"><path d="M0 0h13v13H0z" fill="#d8d8d8" /><path d="M2 8.500h4v2.500H2zM7.500 8.500h4v2.500h-4zM4 5h5V3M7 3h3" fill="none" stroke="#333" /></svg>
      <span className="ml-[7px] flex size-[10px] items-center justify-center bg-[#1515b5]"><Check size={9} strokeWidth={4} /></span>
      <span className="ml-[4px] text-[7.8px] text-[#ddd]">Connected to PLC_1, via</span>
    </div>
  );
}

function TiaPortal() {
  return (
    <div className="flex h-[683px] w-[407px] flex-col overflow-hidden border-l border-[#555] bg-[#c9c9c9] font-['Noto_Sans',sans-serif] text-[#1c1c1c]">
      <div className="flex h-[3px] shrink-0"><span className="w-[74px] bg-[#3a3b3c]" /><span className="flex-1 bg-[#a9aba9]" /></div>
      <div className="flex h-[14px] shrink-0 items-center bg-[#141516] pb-[1px] pl-[3px] text-[8.7px] font-bold text-white">
        <span className="flex w-[11px] flex-col bg-[#2b2b48] text-[5.500px] leading-[5.500px] text-[#cfcfe6]"><span>TIA</span><span>V19</span></span>
        <span className="ml-[5px] whitespace-nowrap">Siemens&nbsp; -&nbsp; D:\test1200\Project1\Project1</span>
      </div>
      <SiemensTop />
      <div className="flex h-[613px]">
        <div className="flex w-[16px] shrink-0 flex-col items-center border-r border-[#878787] bg-[#a6a6a6]">
          <div className="flex h-[17px] w-full shrink-0 items-center justify-center border-b border-[#d0d0d0]">
            <svg width="5" height="8"><path d="M0 0v8L5 4z" fill="#fff" /></svg>
          </div>
          <div className="flex h-[150px] w-full items-center justify-center border-b border-[#d0d0d0] pt-[2px]">
            <span className="rotate-180 text-[9px] font-semibold whitespace-nowrap text-white [writing-mode:vertical-rl]">PLC programming</span>
          </div>
        </div>
        <div className="flex min-w-0 flex-1 flex-col">
          <div className="flex h-[18px] shrink-0 items-center bg-[#f09c0b] pb-[1px] pl-[3px] text-[8.800px] font-semibold whitespace-nowrap text-[#fff6dc] [&>*]:shrink-0">
            <span className="w-[35px]">Project1</span>
            <ChevronRight size={6} strokeWidth={4} className="mx-[4px]" />
            <span className="w-[128px] tracking-[0.1px]">PLC_1 [CPU 1214C DC/DC/DC]</span>
            <ChevronRight size={6} strokeWidth={4} className="mx-[3.500px]" />
            <span className="w-[67px]">Program blocks</span>
            <ChevronRight size={6} strokeWidth={4} className="mx-[4px]" />
            <span className="tracking-[0.18px]">Data_block_2 [DB2]</span>
          </div>
          <div className="h-[16px] shrink-0 bg-[#c9c9c9]" />
          <EditorToolbar />
          <div className="flex h-[16px] shrink-0 items-center bg-[#dadad6] pb-[1px] pl-[17px] text-[9.2px] font-bold text-black">Data_block_2</div>
          <BlockTable />
          <Inspector />
        </div>
      </div>
      <StatusBar />
    </div>
  );
}

function ModifyDialog() {
  const row = "flex h-[18.500px] items-center [&>*]:shrink-0";
  return (
    <div className="absolute top-[288px] left-[710px] flex h-[108px] w-[440px] flex-col border border-r-0 border-[#e2e2e2] bg-[#151617] font-['Noto_Sans',sans-serif] text-[7.8px] text-[#2a2a2a]">
      <div className="flex h-[13px] shrink-0 items-center justify-between border-t-2 border-[#8a8a8a] bg-[#17181a] pb-[2px] pl-[4px] text-[9px] font-bold text-white">
        Modify
        <X size={10} strokeWidth={3.2} className="mr-[1px]" />
      </div>
      <div className="flex h-[60px] shrink-0 flex-col bg-[#cccccc] pt-[5.500px] pl-[5px] whitespace-nowrap">
        <div className={row}>
          <span className="w-[59px]">Operand:</span>
          <span className="flex h-[12px] w-[146px] items-center border border-[#b0b0b0] bg-[#d4d4d4] pt-px pl-px tracking-[-0.03px]">"Data_block_2".water / %DB2.DBD0</span>
          <span className="ml-[6px] w-[67px]">Data type:</span>
          <span className="flex h-[12px] w-[146px] items-center border border-[#b0b0b0] bg-[#d4d4d4] pl-px">Real</span>
        </div>
        <div className={row}>
          <span className="w-[59px]">Modify value:</span>
          <span className="flex h-[12px] w-[146px] items-center border border-[#a0a0a0] bg-white pl-px">200<span className="h-[9px] w-px bg-black" /></span>
          <span className="ml-[6px] w-[67px]">Format:</span>
          <span className="flex h-[12px] w-[146px] items-center justify-between border border-[#a0a0a0] bg-white pl-[2px] tracking-[0.08px]">Floating-point number<DropArrow /></span>
        </div>
      </div>
      <div className="flex h-[28px] shrink-0 items-center justify-end gap-[5px] border-b border-[#8d8d8d] bg-[#b1b1b1] pr-[7.500px]">
        <Button tone="border-[#58a058] bg-linear-to-b from-[#c9f0c2] via-[#84cf7d] to-[#b6e8ae]">OK</Button>
        <Button tone="border-[#999] bg-linear-to-b from-[#f0f0f0] to-[#cfcfcf]">Cancel</Button>
      </div>
    </div>
  );
}

function Button({ tone, children }: { tone: string; children: ReactNode }) {
  return <span className={`flex h-[13px] w-[55px] items-center justify-center border ${tone}`}>{children}</span>;
}

/* ---------- Windows taskbar ---------- */

function TaskItem({ children, mark = "w-[4px] bg-[#7d7d7d]" }: { children: ReactNode; mark?: string }) {
  return (
    <div className="flex w-[29.700px] flex-col items-center">
      <div className="flex h-[20px] items-center">{children}</div>
      <span className={`mt-[1px] h-[2px] rounded-full ${mark}`} />
    </div>
  );
}

function Taskbar() {
  return (
    <div className="flex h-[32px] items-start bg-linear-to-r from-[#eef0ee] from-70% via-[#ecdcd9] via-88% to-[#e3dde8] pt-[5px] pl-[373px]">
      <svg width="16" height="16" viewBox="0 0 16 16" className="mt-[3px]">
        <path d="M0 0h7.500v7.500H0zM8.500 0H16v7.500H8.500zM0 8.500h7.500V16H0zM8.500 8.500H16V16H8.500z" fill="#1e9be0" />
      </svg>
      <div className="mt-[1px] ml-[10px] flex h-[20px] w-[145px] items-center rounded-full bg-[#fbfcfc] pl-[6px] shadow-sm">
        <Search size={11} strokeWidth={2.4} className="text-[#222]" />
        <span className="ml-[6px] text-[9px] text-[#666]">Search</span>
        <svg width="26" height="18" viewBox="0 0 26 18" className="ml-auto mr-[6px]">
          <path d="M1 6 20 15" stroke="#7b8d3a" strokeWidth="1.600" />
          <path d="M1 10l7-4-5-4M6 12l5-3" fill="none" stroke="#8ebb42" strokeWidth="1.600" />
          <ellipse cx="18" cy="12" rx="6" ry="5" fill="#a39083" />
          <circle cx="12" cy="6" r="4.500" fill="#8c8584" />
          <circle cx="7.500" cy="3.500" r="2.300" fill="#a8a09d" />
          <circle cx="16.500" cy="3.500" r="2.300" fill="#a8a09d" />
          <ellipse cx="12" cy="7" rx="1" ry="1.500" fill="#2d2a2a" />
          <circle cx="20.500" cy="11" r="2.600" fill="#c4b5ab" />
        </svg>
      </div>
      <div className="ml-[3px] flex">
        <TaskItem>
          <svg width="17" height="15" viewBox="0 0 17 15"><path d="M1 1h6l2 2h7v11H1z" fill="#e5a922" /><path d="M1 5h15v9H1z" fill="#fbd35a" /><path d="M4 10h9v4H4z" fill="#2a83c6" /></svg>
        </TaskItem>
        <TaskItem mark="w-0">
          <svg width="16" height="16" viewBox="0 0 16 16"><path d="M5 4V1.500h6V4" fill="none" stroke="#3c88c8" strokeWidth="1.500" /><rect y="3" width="16" height="12.500" rx="2" fill="#1c4d86" /><path d="M4.500 6h3v3h-3z" fill="#e8543b" /><path d="M8.500 6h3v3h-3z" fill="#8bc53f" /><path d="M4.500 10h3v3h-3z" fill="#35a8e8" /><path d="M8.500 10h3v3h-3z" fill="#f9c22e" /></svg>
        </TaskItem>
        <TaskItem mark="w-[11px] bg-[#2a86bd]">
          <span className="flex size-[17px] flex-col items-center justify-center bg-[#20213a] text-[8px] leading-[8px] font-bold text-white"><span>TIA</span><span className="text-[#c5c2ee]">V19</span></span>
        </TaskItem>
        <TaskItem>
          <svg width="16" height="16" viewBox="0 0 16 16"><circle cx="8" cy="8" r="8" fill="#e33b2e" /><path d="M1 4.200A8 8 0 0 0 7.500 16L11.500 9.500 4.500 9.500z" fill="#2f9e4a" /><path d="M7.500 16A8 8 0 0 0 15 4.500H8l3.500 5z" fill="#f9c620" /><circle cx="8" cy="8" r="3.800" fill="#fff" /><circle cx="8" cy="8" r="2.900" fill="#3b78e7" /></svg>
        </TaskItem>
        <TaskItem>
          <svg width="16" height="16" viewBox="0 0 16 16"><path d="M8 15.500A7 7 0 0 1 1 8C1 5 3 4 3 2l2 2c1-2 3-2 4-4 4 2 6 4.500 6 8a7.200 7.200 0 0 1-7 7.500z" fill="#f0613a" /><path d="M9 0c4 2 6 4.500 6 8 0 1-.3 2-.7 3C14 7 12 5 9 4z" fill="#f8c534" /><circle cx="8" cy="9" r="3.800" fill="#8a3fb8" /><path d="M2 8c2-3 5-3 7-1-3 0-3 2-2 4-3 0-5-1-5-3z" fill="#f5852e" /></svg>
        </TaskItem>
        <TaskItem>
          <svg width="16" height="16" viewBox="0 0 16 16"><circle cx="8" cy="8" r="8" fill="#1b78bd" /><path d="M.500 6A8 8 0 0 1 16 8c0 3-5 4-6 2 2-3-1-6-5-5-2 .3-3.500.5-4.500 1z" fill="#42c9a2" /><path d="M6 8c-1 4 3 7 8 5 1-.5.5 1-1.500 2C8 17 4 13 6 8z" fill="#1651a0" /><path d="M8 8c1-1 2 .5 2 2 1 1.500 4 1.300 5.500 0L13.500 13C9 13.500 7 11 8 8z" fill="#eef2f1" /></svg>
        </TaskItem>
        <TaskItem>
          <svg width="16" height="15" viewBox="0 0 16 15"><path d="M4 0h12v15H4z" fill="#23a366" /><path d="M10 0h6v7h-6z" fill="#38c481" /><path d="M4 8h12v7H4z" fill="#17794a" /><path d="M0 3.500h9v9H0z" fill="#0f6b3c" /><path d="M2.500 5.500l4 5M6.500 5.500l-4 5" stroke="#fff" strokeWidth="1.300" /></svg>
        </TaskItem>
        <TaskItem>
          <span className="flex size-[15px] items-center justify-center rounded-[2px] bg-white font-['Liberation_Serif',serif] text-[12px] font-bold text-[#222]">T</span>
        </TaskItem>
      </div>
      <div className="mt-[1px] ml-auto flex h-[20px] items-center text-[#2c2c2c]">
        <ChevronUp size={11} strokeWidth={2.2} />
        <svg width="13" height="11" viewBox="0 0 13 11" className="ml-[10px]"><path d="M1 6C2 1 9 0 10 4M1 7c2-3 5-3 8-2" fill="none" stroke="#4d5a4f" strokeWidth="1.600" /><circle cx="9" cy="7.500" r="3.200" fill="#f1de3a" /><path d="M9 6v2" stroke="#333" /></svg>
        <span className="ml-[6px] flex h-[24px] w-[27px] items-center justify-center rounded-[2px] bg-[#f3e9ea] text-[8.400px]">ENG</span>
        <Wifi size={11} strokeWidth={2} className="ml-[6px]" />
        <Volume2 size={10} strokeWidth={2} className="ml-[4px]" />
        <BatteryCharging size={12} strokeWidth={2.400} className="ml-[6px] fill-[#333]" />
        <Bell size={11} strokeWidth={2} className="mr-[12px] ml-[8px] fill-[#17447e] text-[#17447e]" />
      </div>
    </div>
  );
}

export default function App() {
  return (
    <div className="h-[720px] w-[1280px] overflow-hidden bg-black px-[65px] font-['Open_Sans',sans-serif] leading-none">
      <div className="relative flex h-[720px] w-[1150px] flex-col overflow-hidden bg-[#e4e5e5]">
        <div className="flex h-[688px]">
          <div className="flex flex-col">
            <Browser />
            <div className="flex h-[8px] w-[743px] overflow-hidden border-t border-[#aaa] bg-[#d9dada] text-[9px] text-[#333]">
              <span className="h-[8px] w-[20px] shrink-0 border-r border-[#b5b5b5] pl-[6px]">23</span>
              {[1, 2, 3, 4, 5, 6, 7, 8, 9, 10, 11, 12, 13, 14, 15].map((n) => (
                <span key={n} className="w-[47px] shrink-0 border-r border-[#c4c5c5]" />
              ))}
            </div>
          </div>
          <TiaPortal />
        </div>
        <ModifyDialog />
        <Taskbar />
      </div>
    </div>
  );
}
